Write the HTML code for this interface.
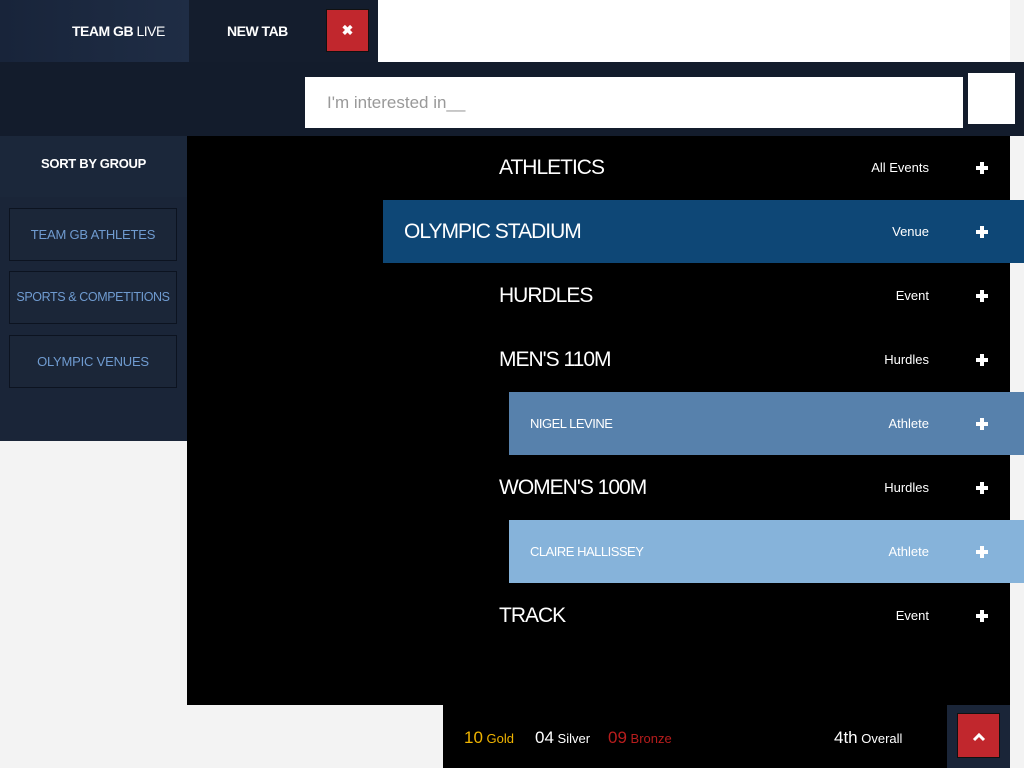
<!DOCTYPE html>
<html><head><style>
*{margin:0;padding:0;box-sizing:border-box}
html,body{width:1024px;height:768px;overflow:hidden}
body{background:#f3f3f3;position:relative;font-family:"Liberation Sans",sans-serif;color:#fff}
div{position:absolute}
.tab{top:0;height:62px;font-weight:bold;font-size:14px;line-height:62px;letter-spacing:-0.5px}
.btn{left:9px;width:168px;height:53px;border:1px solid #0c1320;background:#1b2638;color:#6f9bd0;font-size:13px;text-align:center;line-height:51px;white-space:nowrap;letter-spacing:-0.2px}
.row{height:64px;left:187px;width:823px}
.t{left:312px;top:0;line-height:64px;font-size:21px;letter-spacing:-1px;white-space:nowrap}
.k{right:81px;line-height:64px;font-size:13px;top:0}
.p{right:22px;top:26px;width:12px;height:12px}
.p:before{content:"";position:absolute;left:4px;top:0;width:4px;height:12px;background:#fff}
.p:after{content:"";position:absolute;left:0;top:4px;width:12px;height:4px;background:#fff}
</style></head><body>
<div style="left:378px;top:0;width:632px;height:62px;background:#fff"></div>
<div class="tab" style="left:0;width:189px;background:linear-gradient(90deg,#18243a,#1f2d45)"><span style="position:absolute;left:72px">TEAM GB <span style="font-weight:normal">LIVE</span></span></div>
<div class="tab" style="left:189px;width:189px;background:#141d2d"><span style="position:absolute;left:38px">NEW TAB</span></div>
<div style="left:326px;top:9px;width:43px;height:43px;background:#c1272d;border:1px solid #111;text-align:center;line-height:41px;font-size:14px;font-weight:bold">✖</div>
<div style="left:0;top:62px;width:1024px;height:74px;background:#131c2c"></div>
<div style="left:305px;top:77px;width:658px;height:51px;background:#fff;color:#999;font-size:17px;line-height:51px;padding-left:22px">I'm interested in__</div>
<div style="left:968px;top:73px;width:47px;height:51px;background:#fff"></div>
<div style="left:0;top:136px;width:187px;height:305px;background:#1a2538"></div>
<div style="left:0;top:136px;width:187px;height:61px;background:#1b273a;font-weight:bold;font-size:13px;line-height:55px;text-align:center;letter-spacing:-0.3px">SORT BY GROUP</div>
<div class="btn" style="top:208px">TEAM GB ATHLETES</div>
<div class="btn" style="top:271px;font-size:12.5px;letter-spacing:-0.4px">SPORTS &amp; COMPETITIONS</div>
<div class="btn" style="top:335px">OLYMPIC VENUES</div>
<div style="left:187px;top:136px;width:823px;height:569px;background:#000"></div>
<div class="row" style="top:136px"><div class="t">ATHLETICS</div><div class="k">All Events</div><div class="p"></div></div>
<div class="row" style="top:200px;left:383px;width:641px;height:63px;background:#0e4776"><div class="t" style="left:21px">OLYMPIC STADIUM</div><div class="k" style="right:95px">Venue</div><div class="p" style="right:36px"></div></div>
<div class="row" style="top:264px"><div class="t">HURDLES</div><div class="k">Event</div><div class="p"></div></div>
<div class="row" style="top:328px"><div class="t">MEN'S 110M</div><div class="k">Hurdles</div><div class="p"></div></div>
<div class="row" style="top:392px;left:509px;width:515px;height:63px;background:#5781ac"><div class="t" style="left:21px;font-size:13px;letter-spacing:-0.5px">NIGEL LEVINE</div><div class="k" style="right:95px">Athlete</div><div class="p" style="right:36px"></div></div>
<div class="row" style="top:456px"><div class="t">WOMEN'S 100M</div><div class="k">Hurdles</div><div class="p"></div></div>
<div class="row" style="top:520px;left:509px;width:515px;height:63px;background:#86b3da"><div class="t" style="left:21px;font-size:13px;letter-spacing:-0.5px">CLAIRE HALLISSEY</div><div class="k" style="right:95px">Athlete</div><div class="p" style="right:36px"></div></div>
<div class="row" style="top:584px"><div class="t">TRACK</div><div class="k">Event</div><div class="p"></div></div>
<div style="left:443px;top:705px;width:567px;height:63px;background:#000;font-size:13px;line-height:65px">
<span style="position:absolute;left:21px;color:#f0b400"><span style="font-size:17px">10</span> Gold</span>
<span style="position:absolute;left:92px"><span style="font-size:17px">04</span> Silver</span>
<span style="position:absolute;left:165px;color:#b81d1d"><span style="font-size:17px">09</span> Bronze</span>
<span style="position:absolute;left:391px"><span style="font-size:17px">4th</span> Overall</span>
</div>
<div style="left:947px;top:705px;width:63px;height:63px;background:#1a2538"></div>
<div style="left:957px;top:713px;width:43px;height:45px;background:#c1272d;border:1px solid #111"><svg width="43" height="45" style="position:absolute;left:0;top:0"><path d="M16 26 L21 21 L26 26" stroke="#fff" stroke-width="3" fill="none"/></svg></div>
</body></html>
